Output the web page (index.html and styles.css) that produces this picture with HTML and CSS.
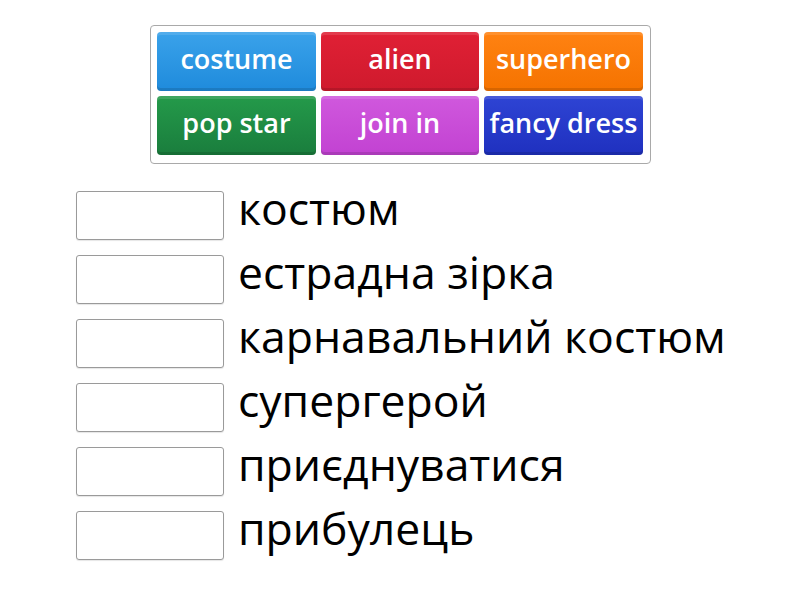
FILE: index.html
```html
<!DOCTYPE html>
<html>
<head>
<meta charset="utf-8">
<link rel="stylesheet" href="styles.css">
</head>
<body>
<div class="page">
  <div class="bank">
    <div class="tile blue">costume</div>
    <div class="tile red">alien</div>
    <div class="tile orange">superhero</div>
    <div class="tile green">pop star</div>
    <div class="tile purple">join in</div>
    <div class="tile navy">fancy dress</div>
  </div>
  <div class="rows">
    <div class="row"><div class="slot"></div><div class="label">костюм</div></div>
    <div class="row"><div class="slot"></div><div class="label">естрадна зірка</div></div>
    <div class="row"><div class="slot"></div><div class="label">карнавальний костюм</div></div>
    <div class="row"><div class="slot"></div><div class="label">супергерой</div></div>
    <div class="row"><div class="slot"></div><div class="label">приєднуватися</div></div>
    <div class="row"><div class="slot"></div><div class="label">прибулець</div></div>
  </div>
</div>
</body>
</html>
```

FILE: styles.css
```css
* { box-sizing: border-box; }
html, body { margin: 0; padding: 0; background: #fff; }
body { font-family: "Open Sans", "Noto Sans", sans-serif; width: 800px; height: 600px; overflow: hidden; }
.page { padding-top: 25px; display: flex; flex-direction: column; align-items: flex-start; }
.bank {
  margin-left: 150px;
  width: 501px;
  border: 1px solid #a9a9a9;
  border-radius: 4px;
  padding: 6px 6px 8px 6px;
  display: grid;
  grid-template-columns: 159px 158px 159px;
  grid-auto-rows: 59px;
  column-gap: 5px;
  row-gap: 5px;
}
.tile {
  border-radius: 4px;
  color: #fff;
  font-weight: 600;
  font-size: 27px;
  display: flex;
  align-items: center;
  justify-content: center;
  padding-bottom: 6px;
  white-space: nowrap;
  box-shadow: inset 0 -3px 0 rgba(0,0,0,0.12), inset 0 3px 0 rgba(255,255,255,0.12);
}
.blue { background: linear-gradient(#3aa2ea, #1f8bdc); }
.red { background: linear-gradient(#e02035, #cf1a2d); }
.orange { background: linear-gradient(#ff8212, #f57300); }
.green { background: linear-gradient(#249a4a, #1a7d3d); }
.purple { background: linear-gradient(#d058dd, #c242d2); }
.navy { background: linear-gradient(#2e44d4, #1f30bf); }
.rows { margin-top: 27px; margin-left: 76px; display: flex; flex-direction: column; gap: 15px; }
.row { display: flex; align-items: flex-start; height: 49px; }
.slot {
  width: 148px; height: 49px;
  border: 1px solid #9a9a9a;
  border-radius: 3px;
  background: #fff;
  box-shadow: 0 1px 1px rgba(0,0,0,0.1);
}
.label { margin-left: 14px; margin-top: -8px; font-size: 44.5px; color: #000; white-space: nowrap; line-height: 49px; }
```
